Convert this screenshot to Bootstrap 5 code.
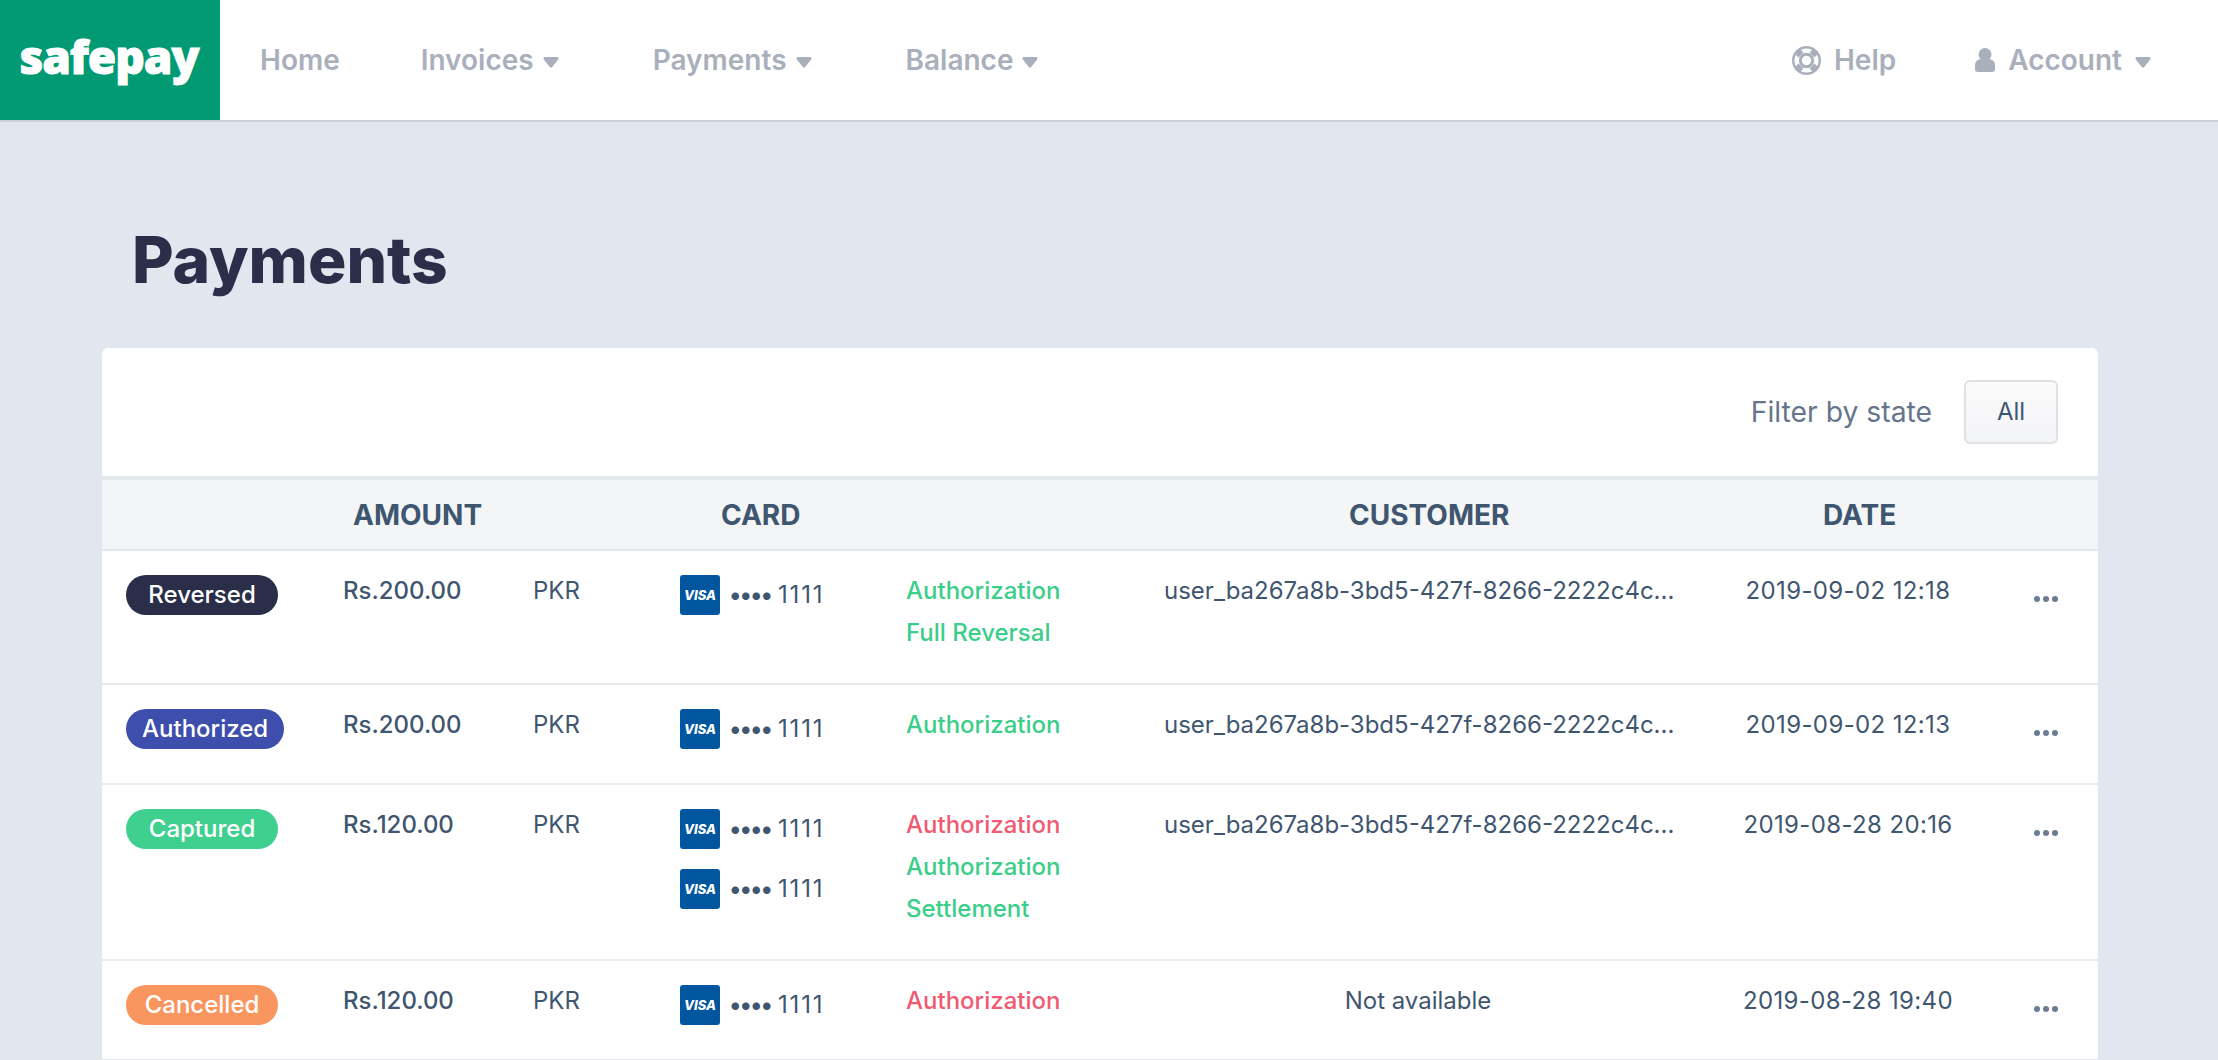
<!DOCTYPE html>
<html lang="en">
<head>
    <meta charset="UTF-8">
    <meta name="viewport" content="width=device-width, initial-scale=1.0">
    <title>Payments</title>
    <link href="https://cdn.jsdelivr.net/npm/bootstrap@5.3.0/dist/css/bootstrap.min.css" rel="stylesheet">
    <style>
        body {
            font-family: Inter, "Liberation Sans", sans-serif;
            background: #e2e7ef;
            color: #3f5670;
            font-size: 24px;
        }
        .top-bar {
            height: 122px;
            background: #fff;
            border-bottom: 2px solid #cbd0d9;
            padding: 0 67px 0 0;
        }
        .logo-box {
            width: 220px;
            height: 120px;
            background: #019a72;
            color: #fff;
            font-family: "Open Sans", sans-serif;
            font-weight: 800;
            font-size: 46px;
            letter-spacing: -1px;
            -webkit-text-stroke: 1px #fff;
            text-decoration: none;
            padding: 0 2px 8px 0;
        }
        .top-bar .navbar-nav .nav-link {
            color: #a9b0bc;
            font-size: 28px;
            font-weight: 600;
            padding: 0;
            display: flex;
            align-items: center;
        }
        .main-links { margin-left: 40px; gap: 81px; }
        .main-links .has-caret { margin-right: 13px; }
        .side-links { gap: 79px; height: 120px; }
        .nav-caret { width: 16px; height: 12px; margin-left: 9px; margin-top: 4px; }
        .side-links .nav-caret { margin-left: 13px; }
        .help-icon { width: 29px; height: 29px; margin-right: 13px; }
        .user-icon { width: 20px; height: 24px; margin-right: 13px; }
        .page-title {
            font-size: 64px;
            font-weight: 800;
            color: #2b2e48;
            margin: 0;
            padding: 100px 0 50px 132px;
            line-height: 76px;
        }
        .pay-card {
            margin: 0 120px 0 102px;
            background: #fff;
            border-radius: 6px 6px 0 0;
        }
        .filter-row {
            height: 132px;
            padding-right: 40px;
            border-bottom: 4px solid #e4e7ec;
            gap: 32px;
        }
        .filter-label { color: #66758c; font-size: 28.3px; }
        .filter-btn {
            width: 94px;
            height: 64px;
            padding: 0;
            font-size: 24px;
            font-weight: 400;
            color: #3f5670;
            border: 2px solid #dde1e6;
            border-radius: 6px;
            background: linear-gradient(#fbfbfc, #f3f4f6);
        }
        .pay-table { table-layout: fixed; margin: 0; --bs-table-color: #3f5670; }
        .pay-table th {
            height: 70px;
            padding: 0;
            background: #f4f5f7;
            color: #3f5670;
            font-size: 28px;
            font-weight: 700;
            text-transform: uppercase;
            vertical-align: middle;
            border-bottom: 2px solid #e4e7ec;
        }
        .pay-table td {
            padding: 19px 0 14px;
            line-height: 42px;
            vertical-align: top;
            border-bottom: 2px solid #e8ebf0;
            white-space: nowrap;
        }
        .pay-table td.txn-list { padding-bottom: 29px; font-weight: 500; }
        .pay-table tr:last-child td { border-bottom: 0; }
        .pay-table .th-amount { padding-left: 10px; }
        .pay-table .th-card { padding-left: 41px; }
        .pay-table .th-customer { padding-left: 185px; }
        .pay-table .th-date { padding-left: 151px; }
        .state-pill {
            min-width: 152px;
            height: 40px;
            margin: 5px 0 0 24px;
            padding: 0 16px;
            border-radius: 20px;
            color: #fff;
            font-weight: 500;
            line-height: 40px;
            text-align: center;
            display: inline-block;
        }
        .state-reversed { background: #2b2e48; }
        .state-authorized { background: #3d4eac; }
        .state-captured { background: #3fd08f; }
        .state-cancelled { background: #f9955e; }
        .amount-text { font-weight: 500; }
        .card-line { height: 40px; margin: 5px 0 20px; gap: 10px; }
        .visa-mark {
            width: 40px;
            height: 40px;
            border-radius: 3px;
            background: #01569f;
            color: #fff;
            font-size: 13px;
            font-weight: 800;
            font-style: italic;
            line-height: 40px;
            text-align: center;
        }
        .card-dots { font-weight: 800; margin-right: 6px; }
        .card-last { letter-spacing: 1.8px; }
        .date-text { letter-spacing: .37px; }
        .txn-ok { color: #3bce8a; }
        .txn-bad { color: #f05a72; }
        .row-menu {
            padding-left: 10px;
            gap: 3px;
            height: 40px;
            margin-top: 5px;
            padding-top: 7px;
        }
        .row-menu i { width: 6px; height: 6px; border-radius: 50%; background: #6b7c93; display: block; }
    </style>
</head>
<body>
    <nav class="navbar navbar-expand top-bar d-flex justify-content-between align-items-start">
        <div class="d-flex align-items-center">
            <a class="logo-box d-flex align-items-center justify-content-center" href="#">safepay</a>
            <ul class="navbar-nav main-links">
                <li class="nav-item"><a class="nav-link" href="#">Home</a></li>
                <li class="nav-item has-caret"><a class="nav-link" href="#">Invoices
                    <svg class="nav-caret" viewBox="0 0 16 12"><path d="M2 1h12a1.500 1.500 0 0 1 1.200 2.400L9.200 11a1.500 1.500 0 0 1-2.400 0L.8 3.400A1.500 1.500 0 0 1 2 1z" fill="#a9b0bc"/></svg></a></li>
                <li class="nav-item has-caret"><a class="nav-link" href="#">Payments
                    <svg class="nav-caret" viewBox="0 0 16 12"><path d="M2 1h12a1.500 1.500 0 0 1 1.200 2.400L9.200 11a1.500 1.500 0 0 1-2.400 0L.8 3.400A1.500 1.500 0 0 1 2 1z" fill="#a9b0bc"/></svg></a></li>
                <li class="nav-item"><a class="nav-link" href="#">Balance
                    <svg class="nav-caret" viewBox="0 0 16 12"><path d="M2 1h12a1.500 1.500 0 0 1 1.200 2.400L9.200 11a1.500 1.500 0 0 1-2.400 0L.8 3.400A1.500 1.500 0 0 1 2 1z" fill="#a9b0bc"/></svg></a></li>
            </ul>
        </div>
        <ul class="navbar-nav side-links align-items-center">
            <li class="nav-item"><a class="nav-link" href="#">
                <svg class="help-icon" viewBox="0 0 29 29"><circle cx="14.500" cy="14.500" r="13.250" fill="none" stroke="#a9b0bc" stroke-width="2.500"/><circle cx="14.500" cy="14.500" r="6.200" fill="none" stroke="#a9b0bc" stroke-width="3"/><path d="M9 9L5.300 5.300M20 9l3.700-3.700M9 20l-3.700 3.700M20 20l3.700 3.700" stroke="#a9b0bc" stroke-width="7"/></svg>Help</a></li>
            <li class="nav-item"><a class="nav-link" href="#">
                <svg class="user-icon" viewBox="0 0 20 24"><circle cx="10" cy="6.500" r="6.500" fill="#a9b0bc"/><path d="M0 21v-4a6 6 0 0 1 6-6h8a6 6 0 0 1 6 6v4a3 3 0 0 1-3 3H3a3 3 0 0 1-3-3z" fill="#a9b0bc"/></svg>Account
                <svg class="nav-caret" viewBox="0 0 16 12"><path d="M2 1h12a1.500 1.500 0 0 1 1.200 2.400L9.200 11a1.500 1.500 0 0 1-2.400 0L.8 3.400A1.500 1.500 0 0 1 2 1z" fill="#a9b0bc"/></svg></a></li>
        </ul>
    </nav>

    <h1 class="page-title">Payments</h1>

    <div class="pay-card">
        <div class="filter-row d-flex justify-content-end align-items-center">
            <span class="filter-label">Filter by state</span>
            <button class="btn filter-btn" type="button">All</button>
        </div>
        <table class="table pay-table">
            <colgroup>
                <col style="width:241px"><col style="width:190px"><col style="width:147px"><col style="width:226px">
                <col style="width:258px"><col style="width:508px"><col style="width:352px"><col style="width:74px">
            </colgroup>
            <thead>
                <tr>
                    <th></th>
                    <th class="th-amount">Amount</th>
                    <th></th>
                    <th class="th-card">Card</th>
                    <th></th>
                    <th class="th-customer">Customer</th>
                    <th class="th-date">Date</th>
                    <th></th>
                </tr>
            </thead>
            <tbody>
                <tr>
                    <td><span class="state-pill state-reversed">Reversed</span></td>
                    <td class="amount-text">Rs.200.00</td>
                    <td>PKR</td>
                    <td><div class="card-line d-flex align-items-center"><span class="visa-mark">VISA</span><span><span class="card-dots">••••</span><span class="card-last">1111</span></span></div></td>
                    <td class="txn-list"><div class="txn-ok">Authorization</div><div class="txn-ok">Full Reversal</div></td>
                    <td class="text-center">user_ba267a8b-3bd5-427f-8266-2222c4c...</td>
                    <td class="text-center date-text">2019-09-02 12:18</td>
                    <td><div class="row-menu d-flex align-items-center"><i></i><i></i><i></i></div></td>
                </tr>
                <tr>
                    <td><span class="state-pill state-authorized">Authorized</span></td>
                    <td class="amount-text">Rs.200.00</td>
                    <td>PKR</td>
                    <td><div class="card-line d-flex align-items-center"><span class="visa-mark">VISA</span><span><span class="card-dots">••••</span><span class="card-last">1111</span></span></div></td>
                    <td class="txn-list"><div class="txn-ok">Authorization</div></td>
                    <td class="text-center">user_ba267a8b-3bd5-427f-8266-2222c4c...</td>
                    <td class="text-center date-text">2019-09-02 12:13</td>
                    <td><div class="row-menu d-flex align-items-center"><i></i><i></i><i></i></div></td>
                </tr>
                <tr>
                    <td><span class="state-pill state-captured">Captured</span></td>
                    <td class="amount-text">Rs.120.00</td>
                    <td>PKR</td>
                    <td>
                        <div class="card-line d-flex align-items-center"><span class="visa-mark">VISA</span><span><span class="card-dots">••••</span><span class="card-last">1111</span></span></div>
                        <div class="card-line d-flex align-items-center"><span class="visa-mark">VISA</span><span><span class="card-dots">••••</span><span class="card-last">1111</span></span></div>
                    </td>
                    <td class="txn-list"><div class="txn-bad">Authorization</div><div class="txn-ok">Authorization</div><div class="txn-ok">Settlement</div></td>
                    <td class="text-center">user_ba267a8b-3bd5-427f-8266-2222c4c...</td>
                    <td class="text-center date-text">2019-08-28 20:16</td>
                    <td><div class="row-menu d-flex align-items-center"><i></i><i></i><i></i></div></td>
                </tr>
                <tr>
                    <td><span class="state-pill state-cancelled">Cancelled</span></td>
                    <td class="amount-text">Rs.120.00</td>
                    <td>PKR</td>
                    <td><div class="card-line d-flex align-items-center"><span class="visa-mark">VISA</span><span><span class="card-dots">••••</span><span class="card-last">1111</span></span></div></td>
                    <td class="txn-list"><div class="txn-bad">Authorization</div></td>
                    <td class="text-center">Not available</td>
                    <td class="text-center date-text">2019-08-28 19:40</td>
                    <td><div class="row-menu d-flex align-items-center"><i></i><i></i><i></i></div></td>
                </tr>
            </tbody>
        </table>
    </div>
    <script src="https://cdn.jsdelivr.net/npm/bootstrap@5.3.0/dist/js/bootstrap.bundle.min.js"></script>
</body>
</html>
